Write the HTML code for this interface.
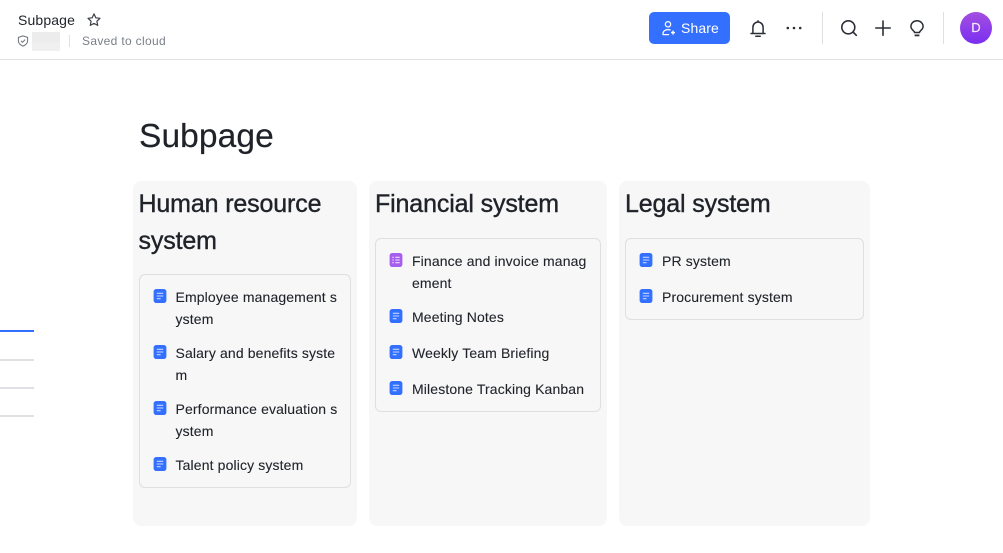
<!DOCTYPE html>
<html><head><meta charset="utf-8">
<style>
html,body{margin:0;padding:0;background:#fff}
body{width:1003px;height:553px;position:relative;overflow:hidden;font-family:"Liberation Sans",sans-serif;color:#1f2329}
.a{position:absolute;white-space:nowrap}
.t{position:absolute;white-space:nowrap;font-size:14px;line-height:22px;color:#1f2329;letter-spacing:.13px;-webkit-text-stroke:.1px #1f2329}
.h{position:absolute;white-space:nowrap;font-size:25px;line-height:37px;font-weight:500;color:#1f2329;letter-spacing:-.14px;-webkit-text-stroke:.4px #1f2329}
.col{position:absolute;top:181px;height:345px;background:#f7f7f7;border-radius:8px}
.box{position:absolute;box-sizing:border-box;border:1px solid #dedfe1;border-radius:6px;background:#f7f7f7}
.ic{position:absolute;width:14px;height:14px}
.ln{position:absolute;left:0;width:34px;height:2px;background:#dee0e3}
</style></head><body>
<svg width="0" height="0" style="position:absolute"><defs>
<symbol id="doc" viewBox="0 0 14 14"><rect x=".6" y="0" width="12.800" height="14" rx="2.600" fill="#3370ff"/><path d="M3.800 4.300h6.400M3.800 7h6.400M3.800 9.700h3.800" stroke="#fff" stroke-width="1.100" opacity=".7"/></symbol>
<symbol id="bt" viewBox="0 0 14 14"><rect x=".6" y="0" width="12.800" height="14" rx="2.600" fill="#a45eeb"/><path d="M3.300 4.300h1.500M6.300 4.300h4.400M3.300 7h1.500M6.300 7h4.400M3.300 9.700h1.500M6.300 9.700h4.400" stroke="#fff" stroke-width="1.100" opacity=".8"/></symbol>
</defs></svg>

<div class="a" style="left:0;top:59px;width:1003px;height:1px;background:#e0e1e3"></div>
<div class="a" style="left:18px;top:11px;font-size:14px;line-height:18px;letter-spacing:.14px;color:#1f2329">Subpage</div>
<svg class="a" style="left:86px;top:12px" width="16" height="16" viewBox="0 0 16 16"><path d="M8 1.900l1.800 3.900 4.200.5-3.100 2.900.8 4.200L8 11.400l-3.700 2 .8-4.200L2 6.300l4.200-.5z" fill="none" stroke="#3b3f45" stroke-width="1.200" stroke-linejoin="round"/></svg>
<svg class="a" style="left:17px;top:35px" width="12" height="12" viewBox="0 0 12 12"><path d="M6 .9l4.600 1.500v3.400c0 2.600-2 4.400-4.600 5.300C3.400 10.200 1.400 8.400 1.400 5.800V2.400z" fill="none" stroke="#6b7078" stroke-width="1"/><path d="M3.900 5.800l1.500 1.500 2.700-2.700" fill="none" stroke="#6b7078" stroke-width="1"/></svg>
<div class="a" style="left:32px;top:32px;width:28px;height:19px;background:linear-gradient(180deg,#ececec 0,#ececec 55%,#f0f0f0 55%)"></div>
<div class="a" style="left:69px;top:35px;width:1px;height:12px;background:#dee0e3"></div>
<div class="a" style="left:82px;top:33px;font-size:12px;line-height:16px;color:#7a7f87;letter-spacing:.33px">Saved to cloud</div>

<div class="a" style="left:649px;top:12px;width:81px;height:32px;background:#3370ff;border-radius:5px"></div>
<svg class="a" style="left:661px;top:20px" width="16" height="16" viewBox="0 0 16 16"><circle cx="7" cy="4.300" r="2.700" fill="none" stroke="#fff" stroke-width="1.200"/><path d="M2 14.600v-1c0-2.400 2.200-4 5-4 .8 0 1.500.1 2.200.3M2 14.600h5.600" fill="none" stroke="#fff" stroke-width="1.200" stroke-linecap="round"/><path d="M12 10.600v4M10 12.600h4" stroke="#fff" stroke-width="1.400"/></svg>
<div class="a" style="left:681px;top:19px;font-size:14px;line-height:18px;color:#fff;letter-spacing:.1px">Share</div>

<svg class="a" style="left:749px;top:19px" width="18" height="19" viewBox="0 0 18 19"><path d="M2 14.500h14M3.900 14.500V8.300C3.900 5.400 6.200 3 9 3s5.100 2.400 5.100 5.300v6.200" fill="none" stroke="#2b2f36" stroke-width="1.500" stroke-linecap="round"/><path d="M6.800 17.300h4.400" stroke="#2b2f36" stroke-width="1.500" stroke-linecap="round"/><path d="M9 1.200v1.800" stroke="#2b2f36" stroke-width="1.400"/></svg>
<svg class="a" style="left:785px;top:20px" width="18" height="16" viewBox="0 0 18 16"><circle cx="2.800" cy="8" r="1.300" fill="#2b2f36"/><circle cx="9" cy="8" r="1.300" fill="#2b2f36"/><circle cx="15.200" cy="8" r="1.300" fill="#2b2f36"/></svg>
<div class="a" style="left:822px;top:12px;width:1px;height:32px;background:#dee0e3"></div>
<svg class="a" style="left:840px;top:19px" width="18" height="18" viewBox="0 0 18 18"><circle cx="8.300" cy="8.300" r="6.500" fill="none" stroke="#2b2f36" stroke-width="1.600"/><path d="M13 13l3.300 3.300" stroke="#2b2f36" stroke-width="1.600" stroke-linecap="round"/></svg>
<svg class="a" style="left:874px;top:19px" width="18" height="18" viewBox="0 0 18 18"><path d="M9 2v14.200M1.800 9h14.400" stroke="#2b2f36" stroke-width="1.600" stroke-linecap="round"/></svg>
<svg class="a" style="left:908px;top:19px" width="18" height="19" viewBox="0 0 18 19"><path d="M6.500 13.500c0-1.800-3.600-2.700-3.600-6C2.900 4.200 5.600 1.800 9 1.800s6.100 2.400 6.100 5.700c0 3.300-3.600 4.200-3.600 6z" fill="none" stroke="#2b2f36" stroke-width="1.500" stroke-linejoin="round"/><path d="M6.600 16.400h4.800" stroke="#2b2f36" stroke-width="1.800"/></svg>
<div class="a" style="left:943px;top:12px;width:1px;height:32px;background:#dee0e3"></div>
<div class="a" style="left:960px;top:12px;width:32px;height:32px;border-radius:50%;background:linear-gradient(180deg,#a34fe0,#7a2ff0);color:#f1e6ff;font-size:13px;line-height:32px;text-align:center;-webkit-text-stroke:.2px #f1e6ff">D</div>

<div class="ln" style="top:330px;background:#3370ff"></div>
<div class="ln" style="top:359px"></div>
<div class="ln" style="top:387px"></div>
<div class="ln" style="top:415px"></div>

<div class="a" style="left:139px;top:117px;font-size:33.5px;line-height:40px;color:#1f2329;letter-spacing:.1px;-webkit-text-stroke:.2px #1f2329">Subpage</div>

<div class="col" style="left:133px;width:224px"></div>
<div class="col" style="left:369px;width:238px"></div>
<div class="col" style="left:619px;width:251px"></div>

<div class="h" style="left:138.500px;top:186px">Human resource</div>
<div class="h" style="left:138.500px;top:223px">system</div>
<div class="h" style="left:375px;top:186px">Financial system</div>
<div class="h" style="left:625px;top:186px">Legal system</div>

<div class="box" style="left:139px;top:274px;width:212px;height:214px"></div>
<div class="box" style="left:375px;top:238px;width:226px;height:174px"></div>
<div class="box" style="left:625px;top:238px;width:239px;height:82px"></div>

<svg class="ic" style="left:153px;top:289px"><use href="#doc"/></svg>
<div class="t" style="left:175.500px;top:286px">Employee management s</div>
<div class="t" style="left:175.500px;top:308px">ystem</div>
<svg class="ic" style="left:153px;top:345px"><use href="#doc"/></svg>
<div class="t" style="left:175.500px;top:342px">Salary and benefits syste</div>
<div class="t" style="left:175.500px;top:364px">m</div>
<svg class="ic" style="left:153px;top:401px"><use href="#doc"/></svg>
<div class="t" style="left:175.500px;top:398px">Performance evaluation s</div>
<div class="t" style="left:175.500px;top:420px">ystem</div>
<svg class="ic" style="left:153px;top:457px"><use href="#doc"/></svg>
<div class="t" style="left:175.500px;top:454px">Talent policy system</div>

<svg class="ic" style="left:389px;top:253px"><use href="#bt"/></svg>
<div class="t" style="left:412px;top:250px">Finance and invoice manag</div>
<div class="t" style="left:412px;top:272px">ement</div>
<svg class="ic" style="left:389px;top:309px"><use href="#doc"/></svg>
<div class="t" style="left:412px;top:306px">Meeting Notes</div>
<svg class="ic" style="left:389px;top:345px"><use href="#doc"/></svg>
<div class="t" style="left:412px;top:342px">Weekly Team Briefing</div>
<svg class="ic" style="left:389px;top:381px"><use href="#doc"/></svg>
<div class="t" style="left:412px;top:378px">Milestone Tracking Kanban</div>

<svg class="ic" style="left:639px;top:253px"><use href="#doc"/></svg>
<div class="t" style="left:662px;top:250px">PR system</div>
<svg class="ic" style="left:639px;top:289px"><use href="#doc"/></svg>
<div class="t" style="left:662px;top:286px">Procurement system</div>
</body></html>
